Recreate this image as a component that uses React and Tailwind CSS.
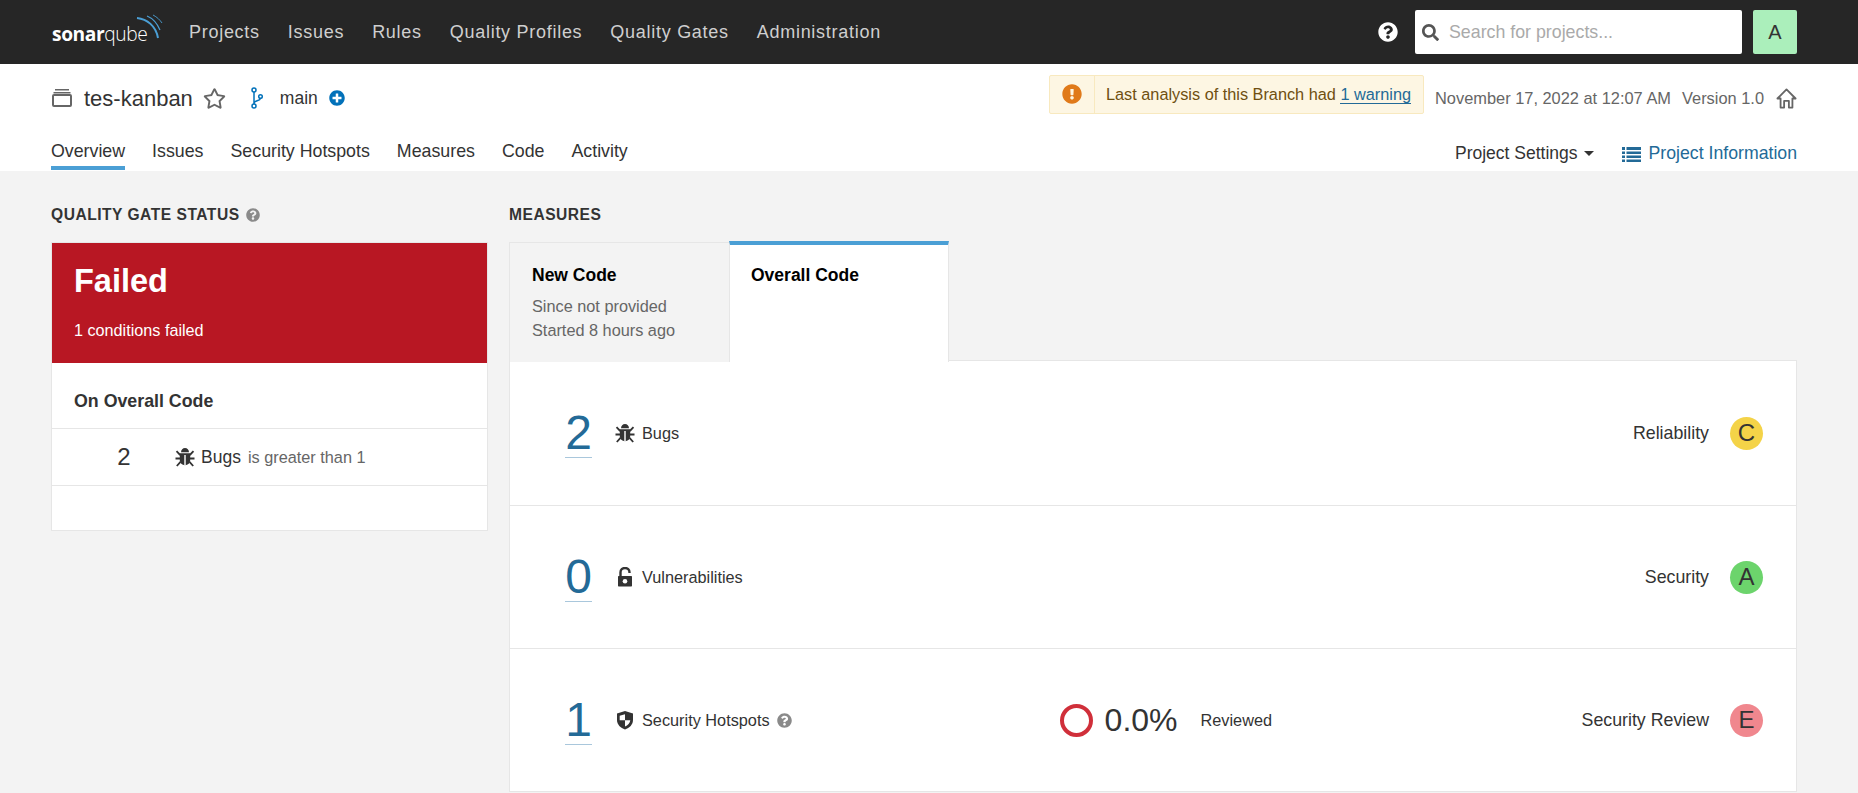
import React from "react";
import { FaQuestionCircle, FaSearch, FaExclamationCircle, FaPlusCircle, FaRegStar } from "react-icons/fa";

const Bug = ({ className = "" }) => (
  <svg viewBox="0 0 20 20" width="20" height="20" className={className}>
    <path d="M6 5.2C6 2.8 7.8 1 10 1s4 1.8 4 4.2z" fill="#333" />
    <path d="M4.8 6.2h10.4V13c0 3-2.3 5.2-5.2 5.2S4.8 16 4.8 13z" fill="#333" />
    <rect x="9.3" y="8" width="1.4" height="10.5" fill="#fff" />
    <path d="M1.5 4.2L5.2 8M18.5 4.2L14.8 8M0.5 11.5H5M19.5 11.5H15M1.8 19L5.5 14.8M18.2 19L14.5 14.8" stroke="#333" strokeWidth="1.8" fill="none" />
  </svg>
);

const Lock = () => (
  <svg viewBox="0 0 14 20" width="14" height="20">
    <path d="M2.5 9V5.2C2.5 2.8 4.5 1 7 1s4.500 1.800 4.500 4.200V6" stroke="#333" strokeWidth="2.400" fill="none" />
    <path d="M1 9h12c.6 0 1 .4 1 1v8.500c0 .6-.4 1-1 1H1c-.6 0-1-.4-1-1V10c0-.6.4-1 1-1z" fill="#333" />
    <circle cx="7" cy="14.200" r="2.300" fill="#fff" />
  </svg>
);

const Shield = () => (
  <svg viewBox="0 0 20 20" width="20" height="20">
    <path d="M10 1l8 2.500v6.500c0 4.500-3.500 8-8 9.500-4.500-1.500-8-5-8-9.500V3.500z" fill="#333" />
    <path d="M10 4.200v6H4.700V5.800zM10 10.200h5.300c-.3 2.900-2.500 5.100-5.300 6.300z" fill="#fff" />
  </svg>
);

const Help = ({ size = 16 }) => <FaQuestionCircle size={size} className="text-[#8a8a8a] shrink-0" />;

const Logo = () => (
  <div className="relative w-[110px] h-[40px] shrink-0">
    <div className="absolute left-0 top-[8px] text-[19.2px] leading-[28px] text-white font-['Open_Sans',sans-serif] tracking-[-0.4px] whitespace-nowrap">
      <span className="font-bold">sonar</span>
      <span className="font-light">qube</span>
    </div>
    <svg viewBox="0 0 30 30" width="30" height="30" className="absolute left-[84px] top-[2px]">
      <path d="M1 4C11 5 20 12 22 24" stroke="#4b9fd5" strokeWidth="2" fill="none" />
      <path d="M11 2C16 4 21 9 24 16" stroke="#4b9fd5" strokeWidth="1.200" fill="none" />
      <path d="M17 1C21 3 24 6 26 9" stroke="#4b9fd5" strokeWidth="0.900" fill="none" />
    </svg>
  </div>
);

function NavItem({ children }) {
  return <span className="text-[18px] tracking-[0.72px] text-[#cfcfcf] whitespace-nowrap">{children}</span>;
}

function SubTab({ children, active }) {
  return (
    <div className={`h-[37px] pt-[5px] text-[17.8px] leading-[26px] text-[#333] whitespace-nowrap border-b-4 ${active ? "border-[#4b9fd5]" : "border-transparent"}`}>
      {children}
    </div>
  );
}

function Rating({ label, grade, color }) {
  return (
    <div className="flex items-center ml-auto">
      <span className="text-[17.8px] text-[#333] whitespace-nowrap">{label}</span>
      <span className={`ml-[21px] w-[33px] h-[33px] rounded-full flex items-center justify-center text-[24px] text-[#333] ${color}`}>{grade}</span>
    </div>
  );
}

function Row({ value, icon, label, extra, mid, rating, first }) {
  return (
    <div className={`${first ? "h-[145px]" : "h-[143px]"} border-b border-[#e6e6e6] flex items-center pl-[55px] pr-[33px] bg-white`}>
      <span className="w-[27px] mt-[2px] flex justify-center border-b border-[#a9c7dc] text-[48px] leading-[45px] text-[#236a97] pb-[2px]">{value}</span>
      <span className="ml-[23px] w-[20px] flex justify-center">{icon}</span>
      <span className="ml-[7px] text-[16.3px] text-[#333] whitespace-nowrap">{label}</span>
      {extra}
      {mid}
      {rating}
    </div>
  );
}

export default function App() {
  return (
    <div className="w-[1858px] h-[793px] overflow-hidden bg-[#f3f3f3] font-['Liberation_Sans',Arial,sans-serif] text-[#333]">
      <nav className="h-16 bg-[#262626] flex items-center pl-[52px] pr-[61px]">
        <Logo />
        <div className="ml-[27px] flex items-center gap-[28px]">
          <NavItem>Projects</NavItem>
          <NavItem>Issues</NavItem>
          <NavItem>Rules</NavItem>
          <NavItem>Quality Profiles</NavItem>
          <NavItem>Quality Gates</NavItem>
          <NavItem>Administration</NavItem>
        </div>
        <FaQuestionCircle size={20} className="ml-auto text-white" />
        <div className="ml-[17px] w-[327px] h-[44px] bg-white rounded-[2px] flex items-center pl-[7px]">
          <FaSearch size={17} className="text-[#555]" />
          <span className="ml-[10px] text-[17.8px] text-[#aaa]">Search for projects...</span>
        </div>
        <div className="ml-[11px] w-[44px] h-[44px] rounded-[2px] bg-[#abefbb] flex items-center justify-center text-[20px] text-[#333]">A</div>
      </nav>

      <header className="h-[107px] bg-white pl-[51px] pr-[61px] flex flex-col">
        <div className="h-[60px] flex items-center">
          <div className="flex items-center mt-[8px] ml-[1px]">
            <svg viewBox="0 0 20 18" width="20" height="18" fill="none" stroke="#666" strokeWidth="2">
              <path d="M3 0.800H17M1.500 3.800H18.500" strokeWidth="1.500" />
              <rect x="1" y="6" width="18" height="11" rx="1" />
            </svg>
            <span className="ml-[12px] text-[22px] text-[#333]">tes-kanban</span>
            <FaRegStar size={23} className="ml-[10px] text-[#666]" />
            <svg viewBox="0 0 12 22" width="12" height="22" fill="none" stroke="#0271b9" strokeWidth="1.500" className="ml-[25px]">
              <circle cx="3" cy="3" r="2" />
              <circle cx="3" cy="19" r="2" />
              <circle cx="9.500" cy="9.500" r="1.800" />
              <path d="M3 5V17M9.500 11.300C9 14 3.500 13.500 3 16" />
            </svg>
            <span className="ml-[17px] text-[17.5px] text-[#333]">main</span>
            <FaPlusCircle size={16} className="ml-[11px] text-[#0271b9]" />
          </div>
          <div className="ml-auto flex items-center">
            <div className="h-[39px] w-[375px] bg-[#fdf6e3] border border-[#f8e9bf] rounded-[2px] flex items-center">
              <span className="w-[45px] h-full border-r border-[#f8e9bf] flex items-center justify-center">
                <FaExclamationCircle size={20} className="text-[#e07a1a]" />
              </span>
              <span className="ml-[11px] text-[16.3px] text-[#6f4f10] whitespace-nowrap">
                Last analysis of this Branch had{" "}
                <span className="text-[#236a97] border-b border-[#236a97]">1 warning</span>
              </span>
            </div>
            <span className="ml-[11px] mt-[8px] text-[16.4px] text-[#666] whitespace-nowrap">November 17, 2022 at 12:07 AM</span>
            <span className="ml-[11px] mt-[8px] text-[16.4px] text-[#666] whitespace-nowrap">Version 1.0</span>
            <svg viewBox="0 0 22 22" width="21" height="21" fill="none" stroke="#666" strokeWidth="1.900" className="ml-[12px] mt-[8px]">
              <path d="M11 1.500L20.500 11H17.200V20.500H13.500V13.500H8.500V20.500H4.800V11H1.500z" strokeLinejoin="round" />
            </svg>
          </div>
        </div>
        <div className="flex-1 flex items-end pb-[1px]">
          <div className="flex gap-[27px]">
            <SubTab active>Overview</SubTab>
            <SubTab>Issues</SubTab>
            <SubTab>Security Hotspots</SubTab>
            <SubTab>Measures</SubTab>
            <SubTab>Code</SubTab>
            <SubTab>Activity</SubTab>
          </div>
          <div className="ml-auto h-[37px] flex items-center pt-[4px]">
            <span className="text-[17.5px] text-[#333] whitespace-nowrap">Project Settings</span>
            <span className="ml-[6px] w-0 h-0 border-l-[5px] border-r-[5px] border-t-[5px] border-l-transparent border-r-transparent border-t-[#333]" />
            <svg viewBox="0 0 19 16" width="19" height="16" fill="#236a97" className="ml-[28px]">
              <path d="M0 1h3v3H0zM4.500 1H19v3H4.500zM0 5.500h3v2.500H0zM4.500 5.500H19v2.500H4.500zM0 9.500h3v2.500H0zM4.500 9.500H19v2.500H4.500zM0 13.500h3V16H0zM4.500 13.500H19V16H4.500z" />
            </svg>
            <span className="ml-[8px] text-[17.7px] text-[#236a97] whitespace-nowrap">Project Information</span>
          </div>
        </div>
      </header>

      <main className="flex pl-[51px] pr-[61px]">
        <section className="w-[437px] shrink-0">
          <div className="h-[71px] pt-[35px] flex items-start">
            <h2 className="text-[15.6px] leading-[18px] font-bold tracking-[0.5px] text-[#333] whitespace-nowrap">QUALITY GATE STATUS</h2>
            <span className="ml-[6px] mt-[2px]"><Help size={14} /></span>
          </div>
          <div className="border border-[#e6e6e6] bg-white h-[289px]">
            <div className="h-[120px] bg-[#b81723] text-white px-[22px] pt-[16px]">
              <div className="text-[32.500px] leading-[44px] font-bold">Failed</div>
              <div className="mt-[15px] text-[16.200px] leading-[24px]">1 conditions failed</div>
            </div>
            <div className="h-[66px] border-b border-[#e6e6e6] flex items-center px-[22px] pt-[11px]">
              <span className="text-[17.800px] font-bold text-[#333]">On Overall Code</span>
            </div>
            <div className="h-[57px] border-b border-[#e6e6e6] flex items-center">
              <span className="w-[124px] text-center text-[24px] pl-[20px] -mr-[1px] text-[#333]">2</span>
              <Bug />
              <span className="ml-[6px] text-[17.500px] text-[#333]">Bugs</span>
              <span className="ml-[7px] text-[16.300px] text-[#666]">is greater than 1</span>
            </div>
          </div>
        </section>

        <section className="ml-[21px] flex-1 min-w-0">
          <div className="h-[70px] pt-[35px]">
            <h2 className="text-[15.6px] leading-[18px] font-bold tracking-[0.5px] text-[#333]">MEASURES</h2>
          </div>
          <div className="flex h-[120px] relative z-10">
            <div className="w-[220px] h-[120px] mt-[1px] border-l border-t border-[#e6e6e6] bg-[#f3f3f3] pl-[22px] pt-[19px]">
              <div className="text-[17.500px] leading-[26px] font-bold text-black">New Code</div>
              <div className="mt-[6px] text-[16.300px] leading-[24px] text-[#666]">Since not provided</div>
              <div className="text-[16.300px] leading-[24px] text-[#666]">Started 8 hours ago</div>
            </div>
            <div className="w-[220px] h-[121px] border-t-4 border-t-[#4b9fd5] border-x border-[#e6e6e6] bg-white pl-[21px] pt-[17px]">
              <div className="text-[17.500px] leading-[26px] font-bold text-black">Overall Code</div>
            </div>
          </div>
          <div className="border-x border-t border-[#e6e6e6] -mt-[1px] bg-white">
            <Row first value="2" icon={<Bug />} label="Bugs" rating={<Rating label="Reliability" grade="C" color="bg-[#f4d348]" />} />
            <Row value="0" icon={<Lock />} label="Vulnerabilities" rating={<Rating label="Security" grade="A" color="bg-[#6cd46c]" />} />
            <Row
              value="1"
              icon={<Shield />}
              label="Security Hotspots"
              extra={<span className="ml-[7px]"><Help size={15} /></span>}
              mid={
                <div className="flex items-center ml-[268px]">
                  <span className="w-[33px] h-[33px] rounded-full border-[4px] border-[#d02f3a]" />
                  <span className="ml-[12px] text-[32px] text-[#333]">0.0%</span>
                  <span className="ml-[23px] text-[16.300px] text-[#333]">Reviewed</span>
                </div>
              }
              rating={<Rating label="Security Review" grade="E" color="bg-[#f0878e]" />}
            />
          </div>
        </section>
      </main>
    </div>
  );
}
